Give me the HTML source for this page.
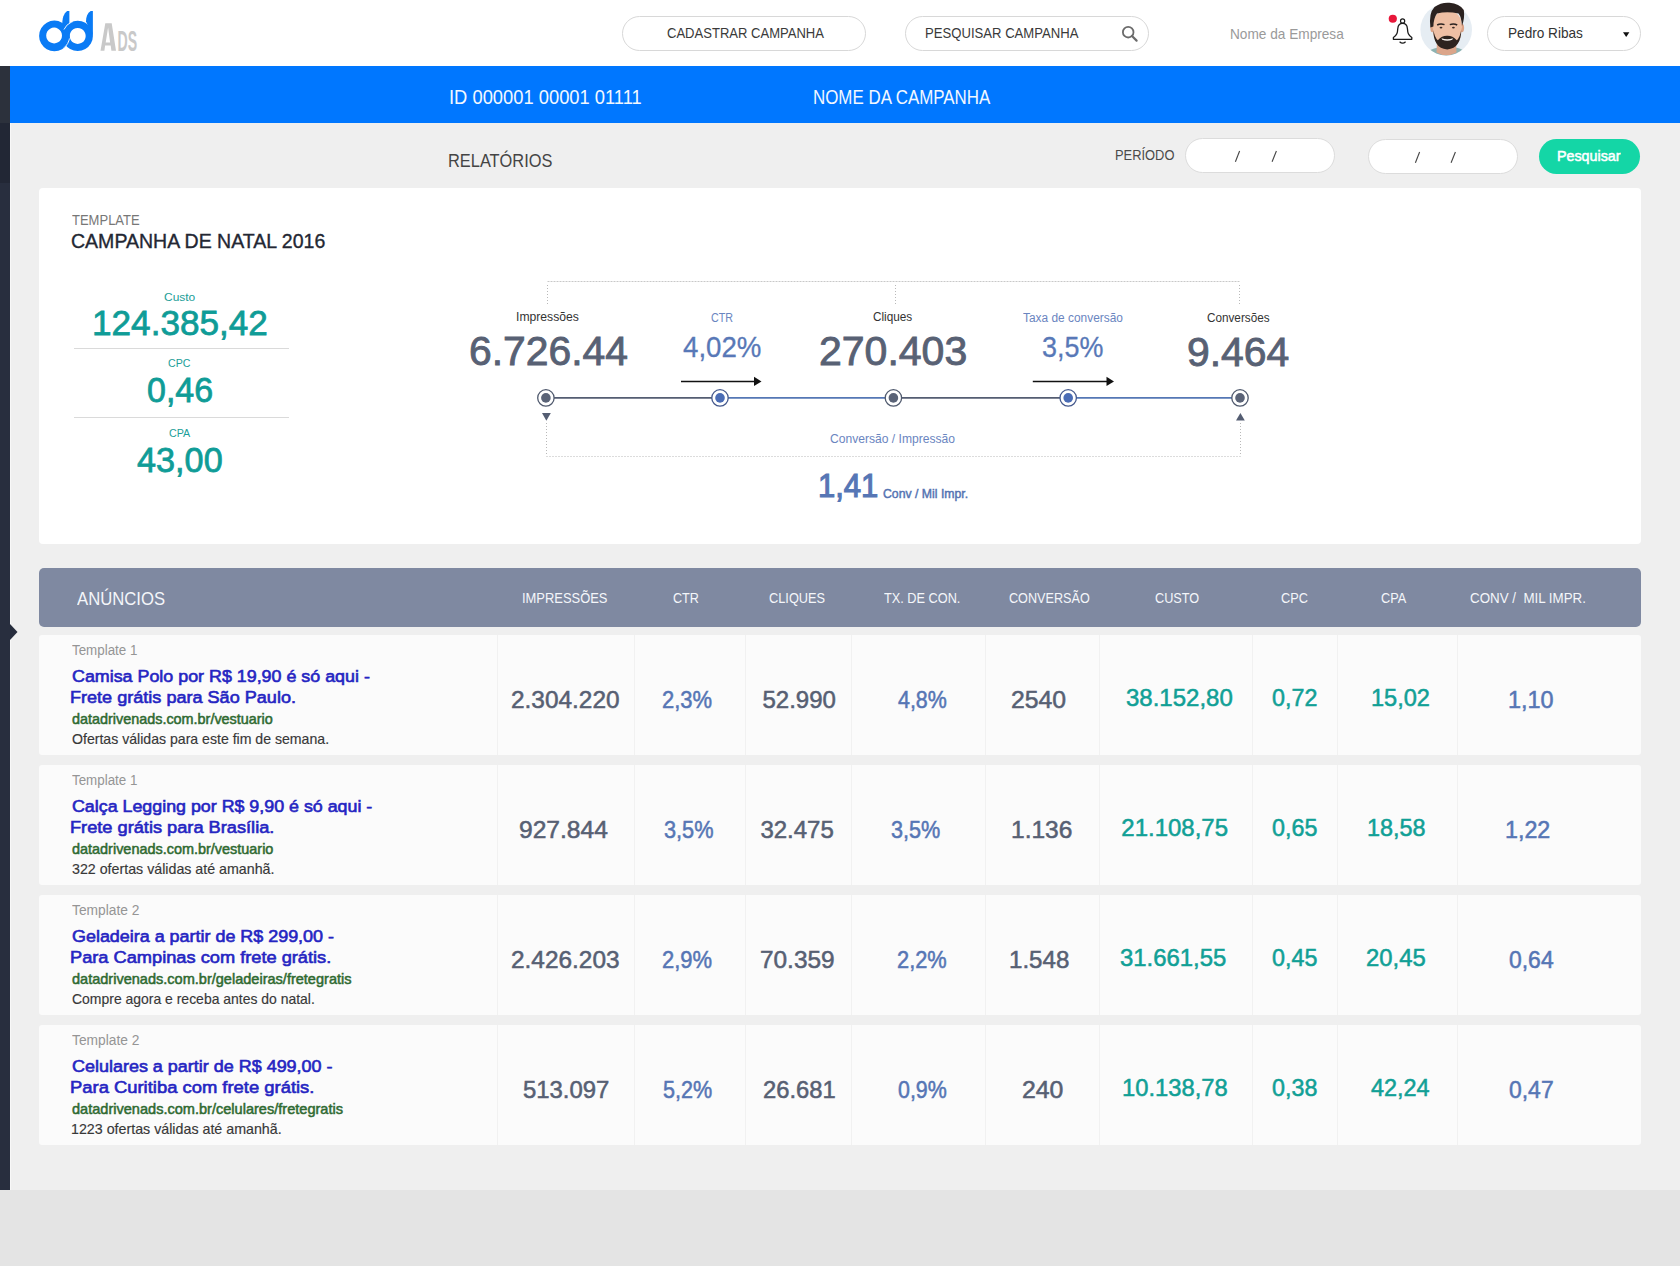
<!DOCTYPE html>
<html><head><meta charset="utf-8"><title>Relatórios</title>
<style>
html,body{margin:0;padding:0;}
body{width:1680px;height:1266px;position:relative;overflow:hidden;background:#e4e4e4;font-family:"Liberation Sans",sans-serif;}
.b{position:absolute;box-sizing:border-box;}
.t{position:absolute;white-space:pre;transform-origin:0 0;line-height:1;font-family:"Liberation Sans",sans-serif;}
svg.full{position:absolute;left:0;top:0;}
</style></head><body>
<div class="b" style="left:0;top:0;width:1680px;height:66px;background:#ffffff"></div>
<div class="b" style="left:0;top:66px;width:10px;height:1124px;background:#282e3e"></div>
<div class="b" style="left:0;top:66px;width:10px;height:57px;background:#2c313c"></div>
<div class="b" style="left:0;top:123px;width:10px;height:60px;background:#222735"></div>
<div class="b" style="left:10px;top:66px;width:1670px;height:57px;background:#0077ff"></div>
<div class="b" style="left:10px;top:123px;width:1670px;height:1067px;background:#efefef"></div>
<div class="b" style="left:10px;top:123px;width:1px;height:1067px;background:#f8f8f8"></div>
<!-- header pills -->
<div class="b" style="left:622px;top:16px;width:244px;height:35px;border:1px solid #d8d8d8;border-radius:18px;background:#fff"></div>
<div class="b" style="left:905px;top:16px;width:244px;height:35px;border:1px solid #d8d8d8;border-radius:18px;background:#fff"></div>
<div class="b" style="left:1487px;top:16px;width:154px;height:35px;border:1px solid #d8d8d8;border-radius:18px;background:#fff"></div>
<!-- date inputs -->
<div class="b" style="left:1185px;top:138px;width:150px;height:35px;border:1px solid #dcdcdc;border-radius:18px;background:#fff"></div>
<div class="b" style="left:1368px;top:139px;width:150px;height:35px;border:1px solid #dcdcdc;border-radius:18px;background:#fff"></div>
<div class="b" style="left:1539px;top:139px;width:101px;height:35px;border-radius:18px;background:#14d6a6"></div>
<!-- card -->
<div class="b" style="left:39px;top:188px;width:1602px;height:356px;background:#fff;border-radius:4px"></div>
<div class="b" style="left:74px;top:348px;width:215px;height:1px;background:#dadada"></div>
<div class="b" style="left:74px;top:417px;width:215px;height:1px;background:#dadada"></div>
<!-- table header -->
<div class="b" style="left:39px;top:568px;width:1602px;height:59px;background:#7f89a1;border-radius:5px"></div>
<div class="b" style="left:39px;top:635px;width:1602px;height:120px;background:#fbfbfb;border-radius:3px"></div>
<div class="b" style="left:497px;top:635px;width:1px;height:120px;background:#f1f1f1"></div>
<div class="b" style="left:634px;top:635px;width:1px;height:120px;background:#f1f1f1"></div>
<div class="b" style="left:745px;top:635px;width:1px;height:120px;background:#f1f1f1"></div>
<div class="b" style="left:851px;top:635px;width:1px;height:120px;background:#f1f1f1"></div>
<div class="b" style="left:985px;top:635px;width:1px;height:120px;background:#f1f1f1"></div>
<div class="b" style="left:1099px;top:635px;width:1px;height:120px;background:#f1f1f1"></div>
<div class="b" style="left:1252px;top:635px;width:1px;height:120px;background:#f1f1f1"></div>
<div class="b" style="left:1337px;top:635px;width:1px;height:120px;background:#f1f1f1"></div>
<div class="b" style="left:1457px;top:635px;width:1px;height:120px;background:#f1f1f1"></div>
<div class="b" style="left:39px;top:765px;width:1602px;height:120px;background:#fbfbfb;border-radius:3px"></div>
<div class="b" style="left:497px;top:765px;width:1px;height:120px;background:#f1f1f1"></div>
<div class="b" style="left:634px;top:765px;width:1px;height:120px;background:#f1f1f1"></div>
<div class="b" style="left:745px;top:765px;width:1px;height:120px;background:#f1f1f1"></div>
<div class="b" style="left:851px;top:765px;width:1px;height:120px;background:#f1f1f1"></div>
<div class="b" style="left:985px;top:765px;width:1px;height:120px;background:#f1f1f1"></div>
<div class="b" style="left:1099px;top:765px;width:1px;height:120px;background:#f1f1f1"></div>
<div class="b" style="left:1252px;top:765px;width:1px;height:120px;background:#f1f1f1"></div>
<div class="b" style="left:1337px;top:765px;width:1px;height:120px;background:#f1f1f1"></div>
<div class="b" style="left:1457px;top:765px;width:1px;height:120px;background:#f1f1f1"></div>
<div class="b" style="left:39px;top:895px;width:1602px;height:120px;background:#fbfbfb;border-radius:3px"></div>
<div class="b" style="left:497px;top:895px;width:1px;height:120px;background:#f1f1f1"></div>
<div class="b" style="left:634px;top:895px;width:1px;height:120px;background:#f1f1f1"></div>
<div class="b" style="left:745px;top:895px;width:1px;height:120px;background:#f1f1f1"></div>
<div class="b" style="left:851px;top:895px;width:1px;height:120px;background:#f1f1f1"></div>
<div class="b" style="left:985px;top:895px;width:1px;height:120px;background:#f1f1f1"></div>
<div class="b" style="left:1099px;top:895px;width:1px;height:120px;background:#f1f1f1"></div>
<div class="b" style="left:1252px;top:895px;width:1px;height:120px;background:#f1f1f1"></div>
<div class="b" style="left:1337px;top:895px;width:1px;height:120px;background:#f1f1f1"></div>
<div class="b" style="left:1457px;top:895px;width:1px;height:120px;background:#f1f1f1"></div>
<div class="b" style="left:39px;top:1025px;width:1602px;height:120px;background:#fbfbfb;border-radius:3px"></div>
<div class="b" style="left:497px;top:1025px;width:1px;height:120px;background:#f1f1f1"></div>
<div class="b" style="left:634px;top:1025px;width:1px;height:120px;background:#f1f1f1"></div>
<div class="b" style="left:745px;top:1025px;width:1px;height:120px;background:#f1f1f1"></div>
<div class="b" style="left:851px;top:1025px;width:1px;height:120px;background:#f1f1f1"></div>
<div class="b" style="left:985px;top:1025px;width:1px;height:120px;background:#f1f1f1"></div>
<div class="b" style="left:1099px;top:1025px;width:1px;height:120px;background:#f1f1f1"></div>
<div class="b" style="left:1252px;top:1025px;width:1px;height:120px;background:#f1f1f1"></div>
<div class="b" style="left:1337px;top:1025px;width:1px;height:120px;background:#f1f1f1"></div>
<div class="b" style="left:1457px;top:1025px;width:1px;height:120px;background:#f1f1f1"></div>
<svg class="full" width="1680" height="1266" viewBox="0 0 1680 1266">
 <!-- sidebar triangle -->
 <path d="M10 624 L17.5 632 L10 640 Z" fill="#262c3c"/>
 <!-- logo -->
 <defs>
  <clipPath id="ctop"><rect x="63" y="21.5" width="10" height="8"/></clipPath>
  <clipPath id="cbot"><rect x="63" y="38.5" width="10" height="9"/></clipPath>
  <clipPath id="av"><circle cx="1446.2" cy="29.6" r="25.8"/></clipPath>
 </defs>
 <g fill="#0a7bf5" fill-rule="evenodd">
  <path d="M54.4 20.6 a15.3 15.3 0 1 0 0.01 0 Z M54.1 27.6 a7.9 7.9 0 1 1 -0.01 0 Z"/>
  <path d="M69.4 11 L69.4 31.5 L62.3 24.5 C62.1 18.5 63.8 13.2 67.2 11 Z"/>
  <path d="M77.7 20.7 a15.2 15.2 0 1 0 0.01 0 Z M77.7 27.9 a8 8 0 1 1 -0.01 0 Z"/>
  <path d="M92.9 11 L92.9 36 L86 21.5 C85.9 17 87.5 13 90.7 11 Z"/>
  <circle cx="77.7" cy="35.9" r="15.2" fill="none" stroke="#fff" stroke-width="0.9" clip-path="url(#ctop)"/>
  <path d="M54.4 20.6 a15.3 15.3 0 1 0 0.01 0 Z M54.1 27.6 a7.9 7.9 0 1 1 -0.01 0 Z" clip-path="url(#cbot)" stroke="#fff" stroke-width="0.9"/>
 </g>
 <!-- Ads -->
 <path fill-rule="evenodd" fill="#c9c9c9" d="M100.5 50.7 L105.3 23.3 L111.7 23.3 L116 50.7 L111.4 50.7 L110.7 45.4 L105.1 45.4 L104.4 50.7 Z M105.7 42.4 L110.1 42.4 L108.1 27.6 Z"/>
 <text x="117.6" y="50.7" font-family="Liberation Sans" font-weight="700" font-size="29" fill="#c9c9c9" textLength="19.6" lengthAdjust="spacingAndGlyphs">DS</text>
 <!-- search icon -->
 <circle cx="1128.2" cy="32.2" r="5.3" fill="none" stroke="#6b6b6b" stroke-width="1.8"/>
 <line x1="1132" y1="36" x2="1136.6" y2="40.6" stroke="#6b6b6b" stroke-width="2.2" stroke-linecap="round"/>
 <!-- bell -->
 <circle cx="1392.8" cy="18.75" r="4.1" fill="#e8173a"/>
 <circle cx="1402.6" cy="20.9" r="2.1" fill="none" stroke="#1a1a1a" stroke-width="1.2"/>
 <path d="M1402.6 23.3 C1399 23.3 1398 25.5 1397.8 28.5 C1397.5 33 1397 35 1393.4 37.5 L1393.4 39.3 L1411.8 39.3 L1411.8 37.5 C1408.2 35 1407.7 33 1407.4 28.5 C1407.2 25.5 1406.2 23.3 1402.6 23.3 Z" fill="#fff" stroke="#1a1a1a" stroke-width="1.3" stroke-linejoin="round"/>
 <path d="M1399.6 41.8 Q1402.6 44.6 1405.6 41.8" fill="none" stroke="#1a1a1a" stroke-width="1.2"/>
 <!-- avatar -->
 <circle cx="1446.2" cy="29.6" r="25.8" fill="#e6edf3"/>
 <g clip-path="url(#av)">
  <path d="M1426 60 L1429 51 Q1434 47.5 1440 47.5 L1454 47.5 Q1460 47.5 1464 51 L1467 60 Z" fill="#8db3b2"/>
  <path d="M1437 40 L1456 40 L1456.5 52.5 Q1446 58 1436.5 52.5 Z" fill="#dba58a"/>
 </g>
 <ellipse cx="1432.6" cy="28" rx="2.3" ry="4.2" fill="#dca286"/>
 <ellipse cx="1461.8" cy="28" rx="2.3" ry="4.2" fill="#dca286"/>
 <ellipse cx="1447.2" cy="30.4" rx="14.2" ry="18.2" fill="#eebfa4"/>
 <path d="M1432.6 28.5 Q1432 11 1447 10.5 Q1462.5 11 1462 28.5 Z" fill="#eebfa4"/>
 <path d="M1433.4 30 C1433.2 41 1437.5 48.8 1447.2 49.4 C1457 48.8 1461.3 41 1461.2 30 Q1460 37.5 1456.8 40.2 Q1452.5 35.6 1447.2 35.8 Q1442 35.6 1437.8 40.2 Q1434.6 37.5 1433.4 30 Z" fill="#2d231e"/>
 <path d="M1441.5 38.3 Q1447.2 40.4 1453 38.3 L1452.3 39.7 Q1447.2 41.6 1442.2 39.7 Z" fill="#f4efea"/>
 <path d="M1430.4 27.5 Q1428.6 13 1434.5 7 Q1441 2.2 1449.5 2.8 Q1459.5 3.6 1463.8 10 Q1465 17.5 1462 26 Q1461.5 17 1458.5 13.5 Q1447 11 1437 13.5 Q1433.6 18 1433.4 26.5 Z" fill="#2b2220"/>
 <path d="M1437.2 25 Q1440.5 23 1444.5 24.6" fill="none" stroke="#2b2220" stroke-width="1.5"/>
 <path d="M1449.8 24.6 Q1453.8 23 1457.2 25" fill="none" stroke="#2b2220" stroke-width="1.5"/>
 <ellipse cx="1441" cy="27.6" rx="1.4" ry="0.9" fill="#3a2a24"/>
 <ellipse cx="1453.4" cy="27.6" rx="1.4" ry="0.9" fill="#3a2a24"/>
 <!-- pedro caret -->
 <path d="M1623 32.2 L1629.4 32.2 L1626.2 37 Z" fill="#111"/>
 <!-- date slashes -->
 <g stroke="#444" stroke-width="1.1">
  <line x1="1239.6" y1="151" x2="1235.4" y2="161.8"/>
  <line x1="1276.4" y1="151" x2="1272.1" y2="161.8"/>
  <line x1="1419.6" y1="152" x2="1415.4" y2="162.8"/>
  <line x1="1455.4" y1="152" x2="1451.1" y2="162.8"/>
 </g>
 <!-- funnel dotted frame -->
 <g stroke="#b9b9b9" stroke-width="1" stroke-dasharray="1 2" fill="none">
  <line x1="547.5" y1="281.5" x2="1240" y2="281.5" stroke-dasharray="2 1" stroke="#c8c8c8"/>
  <line x1="547.5" y1="285" x2="547.5" y2="304"/>
  <line x1="895.5" y1="285" x2="895.5" y2="304"/>
  <line x1="1239.5" y1="285" x2="1239.5" y2="304"/>
  <line x1="546.5" y1="423" x2="546.5" y2="456"/>
  <line x1="1240.5" y1="423" x2="1240.5" y2="456"/>
  <line x1="546.5" y1="456.5" x2="1240.5" y2="456.5"/>
 </g>
 <!-- timeline -->
 <line x1="546" y1="397.9" x2="720" y2="397.9" stroke="#545d72" stroke-width="1.8"/>
 <line x1="720" y1="397.9" x2="893.4" y2="397.9" stroke="#5577b5" stroke-width="1.8"/>
 <line x1="893.4" y1="397.9" x2="1068.2" y2="397.9" stroke="#545d72" stroke-width="1.8"/>
 <line x1="1068.2" y1="397.9" x2="1240" y2="397.9" stroke="#5577b5" stroke-width="1.8"/>
 <g fill="#fff" stroke-width="1.3">
  <circle cx="545.9" cy="397.9" r="8.2" stroke="#505a6e"/>
  <circle cx="720" cy="397.9" r="8.2" stroke="#44588c"/>
  <circle cx="893.4" cy="397.9" r="8.2" stroke="#505a6e"/>
  <circle cx="1068.2" cy="397.9" r="8.2" stroke="#44588c"/>
  <circle cx="1240" cy="397.9" r="8.2" stroke="#505a6e"/>
 </g>
 <circle cx="545.9" cy="397.9" r="4.8" fill="#5a6377"/>
 <circle cx="720" cy="397.9" r="4.8" fill="#4a6cb5"/>
 <circle cx="893.4" cy="397.9" r="4.8" fill="#5a6377"/>
 <circle cx="1068.2" cy="397.9" r="4.8" fill="#4a6cb5"/>
 <circle cx="1240" cy="397.9" r="4.8" fill="#5a6377"/>
 <path d="M542 413 L550.8 413 L546.4 420.7 Z" fill="#545d72"/>
 <path d="M1236 420.6 L1244.8 420.6 L1240.4 413 Z" fill="#545d72"/>
 <!-- arrows -->
 <line x1="681" y1="381.4" x2="755" y2="381.4" stroke="#111" stroke-width="1.5"/>
 <path d="M754 376.7 L761.5 381.4 L754 386 Z" fill="#111"/>
 <line x1="1032.8" y1="381.4" x2="1107" y2="381.4" stroke="#111" stroke-width="1.5"/>
 <path d="M1106.5 376.7 L1114 381.4 L1106.5 386 Z" fill="#111"/>
</svg>

<div class="t" style="left:666.60px;top:25.89px;font-size:14.3px;color:#3a3a3a;transform:scaleX(0.9121);">CADASTRAR CAMPANHA</div>
<div class="t" style="left:925.08px;top:25.89px;font-size:14.3px;color:#3a3a3a;transform:scaleX(0.9171);">PESQUISAR CAMPANHA</div>
<div class="t" style="left:1229.66px;top:27.12px;font-size:14.5px;color:#9a9a9a;transform:scaleX(0.9411);">Nome da Empresa</div>
<div class="t" style="left:1507.66px;top:25.72px;font-size:14.5px;color:#333333;transform:scaleX(0.9383);">Pedro Ribas</div>
<div class="t" style="left:449.08px;top:86.82px;font-size:20px;color:#f2f7ff;transform:scaleX(0.9170);">ID 000001 00001 01111</div>
<div class="t" style="left:812.90px;top:86.82px;font-size:20px;color:#f2f7ff;transform:scaleX(0.8457);">NOME DA CAMPANHA</div>
<div class="t" style="left:448.14px;top:150.61px;font-size:19px;color:#444444;transform:scaleX(0.8627);">RELATÓRIOS</div>
<div class="t" style="left:1115.34px;top:147.10px;font-size:15px;color:#4a4a4a;transform:scaleX(0.8591);">PERÍODO</div>
<div class="t" style="left:1557.05px;top:147.90px;font-size:15px;color:#ffffff;transform:scaleX(0.9527);-webkit-text-stroke:0.54px #ffffff;">Pesquisar</div>
<div class="t" style="left:71.50px;top:212.72px;font-size:14.5px;color:#777777;transform:scaleX(0.8972);">TEMPLATE</div>
<div class="t" style="left:70.52px;top:232.15px;font-size:19.9px;color:#232733;transform:scaleX(0.9815);-webkit-text-stroke:0.35px #232733;">CAMPANHA DE NATAL 2016</div>
<div class="t" style="left:163.80px;top:291.08px;font-size:11.6px;color:#1b9e98;transform:scaleX(1.0322);">Custo</div>
<div class="t" style="left:91.57px;top:306.41px;font-size:34.6px;color:#0f9c97;transform:scaleX(1.0163);-webkit-text-stroke:0.76px #0f9c97;">124.385,42</div>
<div class="t" style="left:168.20px;top:356.78px;font-size:11.6px;color:#1b9e98;transform:scaleX(0.9168);">CPC</div>
<div class="t" style="left:146.72px;top:372.51px;font-size:34.6px;color:#0f9c97;transform:scaleX(0.9836);-webkit-text-stroke:0.76px #0f9c97;">0,46</div>
<div class="t" style="left:168.50px;top:427.38px;font-size:11.6px;color:#1b9e98;transform:scaleX(0.9249);">CPA</div>
<div class="t" style="left:137.00px;top:442.81px;font-size:34.6px;color:#0f9c97;transform:scaleX(0.9906);-webkit-text-stroke:0.76px #0f9c97;">43,00</div>
<div class="t" style="left:516.06px;top:310.39px;font-size:13px;color:#333333;transform:scaleX(0.9357);">Impressões</div>
<div class="t" style="left:468.61px;top:330.99px;font-size:41.0px;color:#586174;transform:scaleX(0.9962);-webkit-text-stroke:0.90px #586174;">6.726.44</div>
<div class="t" style="left:711.20px;top:311.62px;font-size:12.5px;color:#6a85bf;transform:scaleX(0.8573);">CTR</div>
<div class="t" style="left:683.00px;top:331.81px;font-size:29.4px;color:#5878b7;transform:scaleX(0.9411);-webkit-text-stroke:0.3px #5878b7;">4,02%</div>
<div class="t" style="left:873.00px;top:310.39px;font-size:13px;color:#333333;transform:scaleX(0.9053);">Cliques</div>
<div class="t" style="left:819.00px;top:330.99px;font-size:41.0px;color:#586174;-webkit-text-stroke:0.90px #586174;">270.403</div>
<div class="t" style="left:1023.40px;top:311.72px;font-size:12.5px;color:#6a85bf;transform:scaleX(0.9526);">Taxa de conversão</div>
<div class="t" style="left:1042.08px;top:331.81px;font-size:29.4px;color:#5878b7;transform:scaleX(0.9156);-webkit-text-stroke:0.3px #5878b7;">3,5%</div>
<div class="t" style="left:1207.00px;top:311.29px;font-size:13px;color:#333333;transform:scaleX(0.9017);">Conversões</div>
<div class="t" style="left:1187.30px;top:331.89px;font-size:41.0px;color:#586174;transform:scaleX(0.9970);-webkit-text-stroke:0.90px #586174;">9.464</div>
<div class="t" style="left:830.40px;top:432.72px;font-size:12.5px;color:#6a85bf;transform:scaleX(0.9677);">Conversão / Impressão</div>
<div class="t" style="left:817.66px;top:469.18px;font-size:33.8px;color:#5676b5;transform:scaleX(0.9177);-webkit-text-stroke:1.22px #5676b5;">1,41</div>
<div class="t" style="left:883.20px;top:487.82px;font-size:12.5px;color:#5473b2;transform:scaleX(0.9809);-webkit-text-stroke:0.45px #5473b2;">Conv / Mil Impr.</div>
<div class="t" style="left:76.50px;top:588.91px;font-size:19px;color:#f4f6fa;transform:scaleX(0.8784);">ANÚNCIOS</div>
<div class="t" style="left:521.61px;top:591.22px;font-size:14.5px;color:#f4f6fa;transform:scaleX(0.8916);">IMPRESSÕES</div>
<div class="t" style="left:672.50px;top:591.22px;font-size:14.5px;color:#f4f6fa;transform:scaleX(0.8695);">CTR</div>
<div class="t" style="left:768.50px;top:591.22px;font-size:14.5px;color:#f4f6fa;transform:scaleX(0.8812);">CLIQUES</div>
<div class="t" style="left:883.50px;top:591.22px;font-size:14.5px;color:#f4f6fa;transform:scaleX(0.8781);">TX. DE CON.</div>
<div class="t" style="left:1008.50px;top:591.22px;font-size:14.5px;color:#f4f6fa;transform:scaleX(0.8714);">CONVERSÃO</div>
<div class="t" style="left:1154.50px;top:591.22px;font-size:14.5px;color:#f4f6fa;transform:scaleX(0.8763);">CUSTO</div>
<div class="t" style="left:1280.50px;top:591.22px;font-size:14.5px;color:#f4f6fa;transform:scaleX(0.8791);">CPC</div>
<div class="t" style="left:1381.00px;top:591.22px;font-size:14.5px;color:#f4f6fa;transform:scaleX(0.8773);">CPA</div>
<div class="t" style="left:1470.00px;top:591.22px;font-size:14.5px;color:#f4f6fa;transform:scaleX(0.9206);">CONV /  MIL IMPR.</div>
<div class="t" style="left:72.40px;top:643.15px;font-size:14px;color:#959595;transform:scaleX(0.9549);">Template 1</div>
<div class="t" style="left:71.50px;top:668.24px;font-size:17.2px;color:#2525c2;transform:scaleX(1.0392);-webkit-text-stroke:0.62px #2525c2;">Camisa Polo por R$ 19,90 é só aqui -</div>
<div class="t" style="left:70.45px;top:689.24px;font-size:17.2px;color:#2525c2;transform:scaleX(1.0512);-webkit-text-stroke:0.62px #2525c2;">Frete grátis para São Paulo.</div>
<div class="t" style="left:71.50px;top:712.48px;font-size:14.2px;color:#2f6a31;transform:scaleX(1.0144);-webkit-text-stroke:0.51px #2f6a31;">datadrivenads.com.br/vestuario</div>
<div class="t" style="left:71.50px;top:731.58px;font-size:14.2px;color:#383838;transform:scaleX(0.9938);-webkit-text-stroke:0.15px #383838;">Ofertas válidas para este fim de semana.</div>
<div class="t" style="left:511.08px;top:688.08px;font-size:24.0px;color:#576073;transform:scaleX(1.0169);-webkit-text-stroke:0.53px #576073;">2.304.220</div>
<div class="t" style="left:662.28px;top:688.08px;font-size:24.0px;color:#5676b5;transform:scaleX(0.9164);-webkit-text-stroke:0.53px #5676b5;">2,3%</div>
<div class="t" style="left:762.50px;top:688.08px;font-size:24.0px;color:#576073;-webkit-text-stroke:0.53px #576073;">52.990</div>
<div class="t" style="left:897.50px;top:688.08px;font-size:24.0px;color:#5676b5;transform:scaleX(0.8921);-webkit-text-stroke:0.53px #5676b5;">4,8%</div>
<div class="t" style="left:1010.97px;top:688.08px;font-size:24.0px;color:#576073;transform:scaleX(1.0318);-webkit-text-stroke:0.53px #576073;">2540</div>
<div class="t" style="left:1126.00px;top:685.98px;font-size:24.0px;color:#11a096;-webkit-text-stroke:0.53px #11a096;">38.152,80</div>
<div class="t" style="left:1271.70px;top:685.98px;font-size:24.0px;color:#11a096;transform:scaleX(0.9706);-webkit-text-stroke:0.53px #11a096;">0,72</div>
<div class="t" style="left:1370.72px;top:685.98px;font-size:24.0px;color:#11a096;transform:scaleX(0.9811);-webkit-text-stroke:0.53px #11a096;">15,02</div>
<div class="t" style="left:1508.02px;top:687.98px;font-size:24.0px;color:#5676b5;transform:scaleX(0.9766);-webkit-text-stroke:0.53px #5676b5;">1,10</div>
<div class="t" style="left:72.40px;top:773.15px;font-size:14px;color:#959595;transform:scaleX(0.9549);">Template 1</div>
<div class="t" style="left:71.50px;top:798.24px;font-size:17.2px;color:#2525c2;transform:scaleX(1.0371);-webkit-text-stroke:0.62px #2525c2;">Calça Legging por R$ 9,90 é só aqui -</div>
<div class="t" style="left:70.44px;top:819.24px;font-size:17.2px;color:#2525c2;transform:scaleX(1.0592);-webkit-text-stroke:0.62px #2525c2;">Frete grátis para Brasília.</div>
<div class="t" style="left:71.50px;top:842.48px;font-size:14.2px;color:#2f6a31;transform:scaleX(1.0174);-webkit-text-stroke:0.51px #2f6a31;">datadrivenads.com.br/vestuario</div>
<div class="t" style="left:71.50px;top:861.58px;font-size:14.2px;color:#383838;transform:scaleX(1.0027);-webkit-text-stroke:0.15px #383838;">322 ofertas válidas até amanhã.</div>
<div class="t" style="left:519.38px;top:818.08px;font-size:24.0px;color:#576073;transform:scaleX(1.0245);-webkit-text-stroke:0.53px #576073;">927.844</div>
<div class="t" style="left:664.00px;top:818.08px;font-size:24.0px;color:#5676b5;transform:scaleX(0.9050);-webkit-text-stroke:0.53px #5676b5;">3,5%</div>
<div class="t" style="left:760.40px;top:818.08px;font-size:24.0px;color:#576073;-webkit-text-stroke:0.53px #576073;">32.475</div>
<div class="t" style="left:891.00px;top:818.08px;font-size:24.0px;color:#5676b5;transform:scaleX(0.9013);-webkit-text-stroke:0.53px #5676b5;">3,5%</div>
<div class="t" style="left:1010.98px;top:818.08px;font-size:24.0px;color:#576073;transform:scaleX(1.0220);-webkit-text-stroke:0.53px #576073;">1.136</div>
<div class="t" style="left:1121.30px;top:815.98px;font-size:24.0px;color:#11a096;-webkit-text-stroke:0.53px #11a096;">21.108,75</div>
<div class="t" style="left:1271.70px;top:815.98px;font-size:24.0px;color:#11a096;transform:scaleX(0.9706);-webkit-text-stroke:0.53px #11a096;">0,65</div>
<div class="t" style="left:1366.72px;top:815.98px;font-size:24.0px;color:#11a096;transform:scaleX(0.9760);-webkit-text-stroke:0.53px #11a096;">18,58</div>
<div class="t" style="left:1505.03px;top:817.98px;font-size:24.0px;color:#5676b5;transform:scaleX(0.9699);-webkit-text-stroke:0.53px #5676b5;">1,22</div>
<div class="t" style="left:72.40px;top:903.15px;font-size:14px;color:#959595;transform:scaleX(0.9840);">Template 2</div>
<div class="t" style="left:71.50px;top:928.24px;font-size:17.2px;color:#2525c2;transform:scaleX(1.0425);-webkit-text-stroke:0.62px #2525c2;">Geladeira a partir de R$ 299,00 -</div>
<div class="t" style="left:70.44px;top:949.24px;font-size:17.2px;color:#2525c2;transform:scaleX(1.0602);-webkit-text-stroke:0.62px #2525c2;">Para Campinas com frete grátis.</div>
<div class="t" style="left:71.50px;top:972.48px;font-size:14.2px;color:#2f6a31;transform:scaleX(1.0243);-webkit-text-stroke:0.51px #2f6a31;">datadrivenads.com.br/geladeiras/fretegratis</div>
<div class="t" style="left:71.50px;top:991.58px;font-size:14.2px;color:#383838;transform:scaleX(0.9837);-webkit-text-stroke:0.15px #383838;">Compre agora e receba antes do natal.</div>
<div class="t" style="left:511.08px;top:948.08px;font-size:24.0px;color:#576073;transform:scaleX(1.0169);-webkit-text-stroke:0.53px #576073;">2.426.203</div>
<div class="t" style="left:662.28px;top:948.08px;font-size:24.0px;color:#5676b5;transform:scaleX(0.9164);-webkit-text-stroke:0.53px #5676b5;">2,9%</div>
<div class="t" style="left:760.38px;top:948.08px;font-size:24.0px;color:#576073;transform:scaleX(1.0158);-webkit-text-stroke:0.53px #576073;">70.359</div>
<div class="t" style="left:896.59px;top:948.08px;font-size:24.0px;color:#5676b5;transform:scaleX(0.9089);-webkit-text-stroke:0.53px #5676b5;">2,2%</div>
<div class="t" style="left:1008.60px;top:948.08px;font-size:24.0px;color:#576073;transform:scaleX(1.0049);-webkit-text-stroke:0.53px #576073;">1.548</div>
<div class="t" style="left:1120.00px;top:945.98px;font-size:24.0px;color:#11a096;transform:scaleX(0.9960);-webkit-text-stroke:0.53px #11a096;">31.661,55</div>
<div class="t" style="left:1271.70px;top:945.98px;font-size:24.0px;color:#11a096;transform:scaleX(0.9706);-webkit-text-stroke:0.53px #11a096;">0,45</div>
<div class="t" style="left:1365.71px;top:945.98px;font-size:24.0px;color:#11a096;transform:scaleX(0.9930);-webkit-text-stroke:0.53px #11a096;">20,45</div>
<div class="t" style="left:1509.00px;top:947.98px;font-size:24.0px;color:#5676b5;transform:scaleX(0.9555);-webkit-text-stroke:0.53px #5676b5;">0,64</div>
<div class="t" style="left:72.40px;top:1033.15px;font-size:14px;color:#959595;transform:scaleX(0.9840);">Template 2</div>
<div class="t" style="left:71.50px;top:1058.24px;font-size:17.2px;color:#2525c2;transform:scaleX(1.0449);-webkit-text-stroke:0.62px #2525c2;">Celulares a partir de R$ 499,00 -</div>
<div class="t" style="left:70.43px;top:1079.24px;font-size:17.2px;color:#2525c2;transform:scaleX(1.0705);-webkit-text-stroke:0.62px #2525c2;">Para Curitiba com frete grátis.</div>
<div class="t" style="left:71.50px;top:1102.48px;font-size:14.2px;color:#2f6a31;transform:scaleX(1.0258);-webkit-text-stroke:0.51px #2f6a31;">datadrivenads.com.br/celulares/fretegratis</div>
<div class="t" style="left:70.50px;top:1121.58px;font-size:14.2px;color:#383838;transform:scaleX(1.0041);-webkit-text-stroke:0.15px #383838;">1223 ofertas válidas até amanhã.</div>
<div class="t" style="left:522.90px;top:1078.08px;font-size:24.0px;color:#576073;transform:scaleX(0.9953);-webkit-text-stroke:0.53px #576073;">513.097</div>
<div class="t" style="left:663.20px;top:1078.08px;font-size:24.0px;color:#5676b5;transform:scaleX(0.8995);-webkit-text-stroke:0.53px #5676b5;">5,2%</div>
<div class="t" style="left:763.31px;top:1078.08px;font-size:24.0px;color:#576073;transform:scaleX(0.9909);-webkit-text-stroke:0.53px #576073;">26.681</div>
<div class="t" style="left:897.50px;top:1078.08px;font-size:24.0px;color:#5676b5;transform:scaleX(0.8921);-webkit-text-stroke:0.53px #5676b5;">0,9%</div>
<div class="t" style="left:1022.17px;top:1078.08px;font-size:24.0px;color:#576073;transform:scaleX(1.0337);-webkit-text-stroke:0.53px #576073;">240</div>
<div class="t" style="left:1122.31px;top:1075.98px;font-size:24.0px;color:#11a096;transform:scaleX(0.9903);-webkit-text-stroke:0.53px #11a096;">10.138,78</div>
<div class="t" style="left:1271.70px;top:1075.98px;font-size:24.0px;color:#11a096;transform:scaleX(0.9706);-webkit-text-stroke:0.53px #11a096;">0,38</div>
<div class="t" style="left:1371.00px;top:1075.98px;font-size:24.0px;color:#11a096;transform:scaleX(0.9764);-webkit-text-stroke:0.53px #11a096;">42,24</div>
<div class="t" style="left:1509.00px;top:1077.98px;font-size:24.0px;color:#5676b5;transform:scaleX(0.9555);-webkit-text-stroke:0.53px #5676b5;">0,47</div>
</body></html>
